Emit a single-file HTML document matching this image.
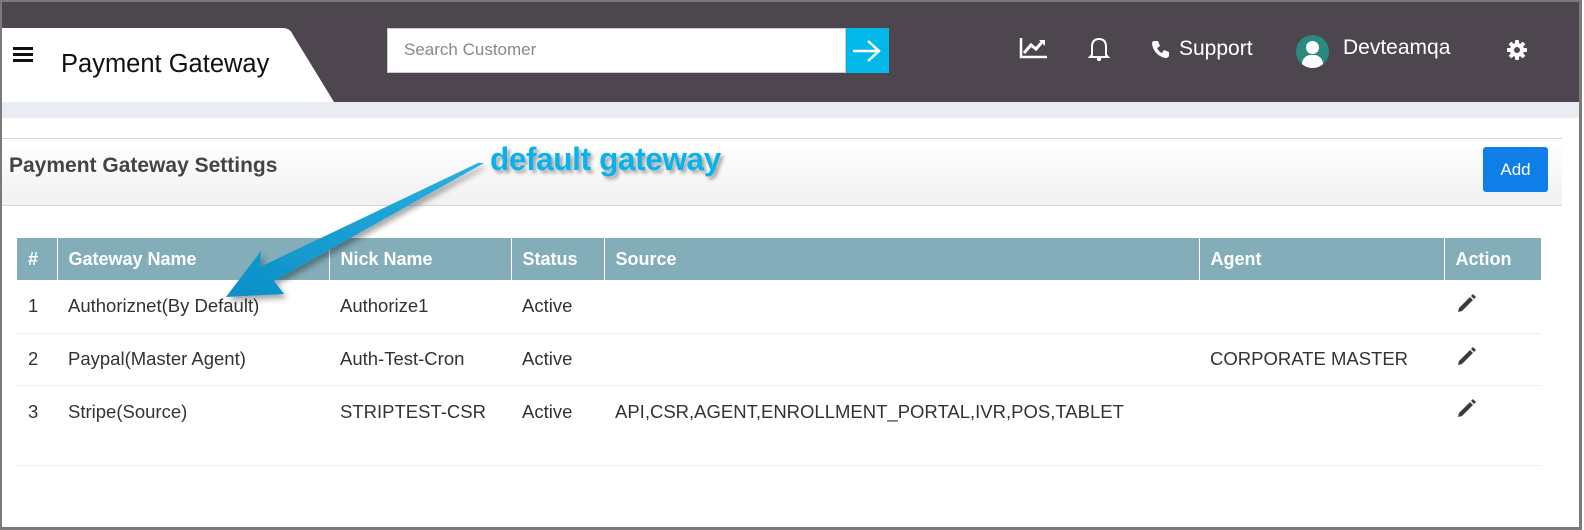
<!DOCTYPE html>
<html><head><meta charset="utf-8"><style>
*{box-sizing:border-box;margin:0;padding:0}
body{width:1584px;height:530px;background:#fff;position:relative;overflow:hidden;font-family:"Liberation Sans",sans-serif}
.abs{position:absolute}
.frame{left:0;top:0;width:1582px;height:530px;border:2px solid #7a7a7a;border-right:3px solid #7a7a7a;border-bottom:3px solid #7a7a7a}
th,td{text-align:left;font-size:18.5px;white-space:nowrap}
th{font-size:18px}
table{border-collapse:collapse;position:absolute;left:17px;top:238px;width:1524px;table-layout:fixed}
th{background:#82adb9;color:#fff;font-weight:bold;height:42px;padding:0 11px;border-right:1px solid #fff}
th:last-child{border-right:none}
td{color:#333;padding:0 11px;border-bottom:1px solid #eee}
</style></head><body>
<div class="abs" style="left:2px;top:2px;width:1577px;height:100px;background:#4d464e"></div>
<svg class="abs" style="left:0;top:0" width="400" height="104"><path d="M2 28 H283 Q290 28 293 35 L334 102 H2 Z" fill="#fff"/></svg>
<div class="abs" style="left:13px;top:47px;width:20px;height:3px;background:#111;box-shadow:0 6px 0 #111,0 12px 0 #111"></div>
<div class="abs" style="left:61px;top:50px;font-size:25.5px;color:#111">Payment Gateway</div>
<div class="abs" style="left:387px;top:28px;width:459px;height:45px;background:#fff;border:1px solid #ccc"></div>
<div class="abs" style="left:404px;top:40px;font-size:17px;color:#888">Search Customer</div>
<div class="abs" style="left:846px;top:28px;width:43px;height:45px;background:#00b9ea"></div>
<svg class="abs" style="left:850px;top:38px" width="34" height="26"><path d="M3 13 H29 M18 3 L29 13 L18 23" stroke="#fff" stroke-width="2.5" fill="none"/></svg>
<svg class="abs" style="left:1019px;top:36px" width="30" height="24"><path d="M2 2 V21 H28" stroke="#fff" stroke-width="2.5" fill="none"/><path d="M5 17 L12 9 L17 13 L24 5" stroke="#fff" stroke-width="3" fill="none"/><path d="M20 4 H26 V10Z" fill="#fff"/></svg>
<svg class="abs" style="left:1087px;top:36px" width="24" height="26"><path d="M5 19 V11 Q5 3 12 3 Q19 3 19 11 V19 L21 21 H3 Z" stroke="#fff" stroke-width="2" fill="none"/><circle cx="12" cy="23" r="2.2" fill="#fff"/></svg>
<svg class="abs" style="left:1151px;top:39px" width="20" height="20"><path d="M3 2 L7 2 L9 7 L6 9 Q8 13 11 14 L13 11 L18 13 L18 17 Q17 19 14 19 Q3 16 1 5 Q1 2 3 2Z" fill="#fff"/></svg>
<div class="abs" style="left:1179px;top:37px;font-size:21px;color:#fff">Support</div>
<div class="abs" style="left:1296px;top:35px;width:33px;height:33px;border-radius:50%;background:#2a8a7f;overflow:hidden">
<div class="abs" style="left:10px;top:6px;width:13px;height:13px;border-radius:50%;background:#fff"></div>
<div class="abs" style="left:6px;top:20px;width:21px;height:14px;border-radius:9px 9px 0 0;background:#fff"></div></div>
<div class="abs" style="left:1343px;top:36px;font-size:21px;color:#fff">Devteamqa</div>
<svg class="abs" style="left:1506px;top:39px" width="22" height="22" viewBox="0 0 22 22"><g fill="#fff"><circle cx="11" cy="11" r="7"/><rect x="9" y="1" width="4" height="20" rx="1"/><rect x="9" y="1" width="4" height="20" rx="1" transform="rotate(45 11 11)"/><rect x="9" y="1" width="4" height="20" rx="1" transform="rotate(90 11 11)"/><rect x="9" y="1" width="4" height="20" rx="1" transform="rotate(135 11 11)"/></g><circle cx="11" cy="11" r="3" fill="#4d464e"/></svg>
<div class="abs" style="left:2px;top:102px;width:1577px;height:16px;background:#e9ecf0"></div>
<div class="abs" style="left:2px;top:138px;width:1560px;height:68px;border-top:1px solid #d6d6d6;border-bottom:1px solid #d6d6d6;background:linear-gradient(#fff,#f1f1f1)"></div>
<div class="abs" style="left:9px;top:154px;font-size:21px;font-weight:bold;color:#444">Payment Gateway Settings</div>
<div class="abs" style="left:1483px;top:147px;width:65px;height:45px;background:#0f7ee8;border-radius:3px;color:#fff;font-size:17px;text-align:center;line-height:45px">Add</div>
<div class="abs" style="left:490px;top:141px;font-family:'Liberation Sans Narrow','Liberation Sans',sans-serif;font-weight:bold;font-size:32px;color:#08b3ec;text-shadow:3px 3px 4px rgba(0,0,0,.35);letter-spacing:-0.3px;transform:scaleX(.98);transform-origin:left">default gateway</div>
<table>
<colgroup><col style="width:40px"><col style="width:272px"><col style="width:182px"><col style="width:93px"><col style="width:595px"><col style="width:245px"><col style="width:97px"></colgroup>
<tr><th>#</th><th>Gateway Name</th><th>Nick Name</th><th>Status</th><th>Source</th><th>Agent</th><th>Action</th></tr>
<tr style="height:53px"><td>1</td><td>Authoriznet(By Default)</td><td>Authorize1</td><td>Active</td><td></td><td></td><td><svg width="22" height="22"><path d="M3 19 L4 15 L15 4 L18 7 L7 18 Z M16 3 L18 1 L21 4 L19 6Z" fill="#3b3b3b"/></svg></td></tr>
<tr style="height:52px"><td>2</td><td>Paypal(Master Agent)</td><td>Auth-Test-Cron</td><td>Active</td><td></td><td>CORPORATE MASTER</td><td><svg width="22" height="22"><path d="M3 19 L4 15 L15 4 L18 7 L7 18 Z M16 3 L18 1 L21 4 L19 6Z" fill="#3b3b3b"/></svg></td></tr>
<tr style="height:80px"><td style="vertical-align:top;padding-top:15px">3</td><td style="vertical-align:top;padding-top:15px">Stripe(Source)</td><td style="vertical-align:top;padding-top:15px">STRIPTEST-CSR</td><td style="vertical-align:top;padding-top:15px">Active</td><td style="vertical-align:top;padding-top:15px">API,CSR,AGENT,ENROLLMENT_PORTAL,IVR,POS,TABLET</td><td></td><td style="vertical-align:top;padding-top:12px"><svg width="22" height="22"><path d="M3 19 L4 15 L15 4 L18 7 L7 18 Z M16 3 L18 1 L21 4 L19 6Z" fill="#3b3b3b"/></svg></td></tr>
</table>
<svg class="abs" style="left:0;top:0" width="600" height="320"><defs><linearGradient id="g" x1="0" y1="1" x2="1" y2="0"><stop offset="0" stop-color="#0a8fc8"/><stop offset="1" stop-color="#2ab0e0"/></linearGradient><filter id="s"><feDropShadow dx="3" dy="4" stdDeviation="3" flood-opacity=".35"/></filter></defs>
<path d="M484 163 L274 281 L284 294 L226 297 L261 251 L260 267 L478 163 Z" fill="url(#g)" filter="url(#s)"/></svg>
<div class="abs frame"></div>
</body></html>
